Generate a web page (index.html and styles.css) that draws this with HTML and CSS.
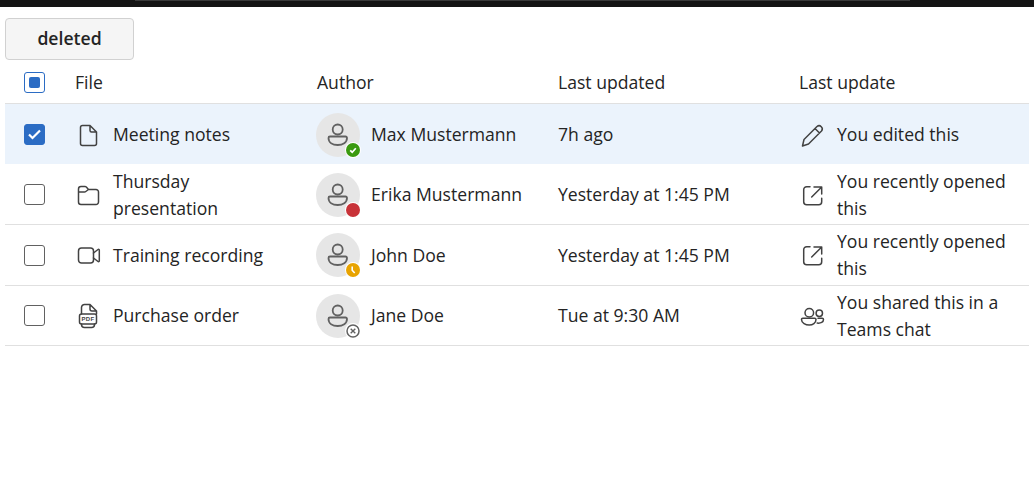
FILE: index.html
```html
<!DOCTYPE html>
<html lang="en">
<head>
<meta charset="utf-8">
<title>Files</title>
<link rel="stylesheet" href="styles.css">
</head>
<body>
<div class="topbar"><div class="topbar-line"></div></div>
<main class="content">
  <button class="btn" type="button">deleted</button>
  <div class="table">
    <div class="row head">
      <div class="cell check"><span class="box mixed"><i></i></span></div>
      <div class="cell">File</div>
      <div class="cell">Author</div>
      <div class="cell">Last updated</div>
      <div class="cell">Last update</div>
    </div>

    <div class="row selected">
      <div class="cell check"><span class="box on"><svg viewBox="0 0 13 11" width="13" height="11"><path d="M1 5.500 4.500 9 12 1.500" fill="none" stroke="#fff" stroke-width="2.200"/></svg></span></div>
      <div class="cell file">
        <svg class="ico" viewBox="0 0 26 26"><path d="M7.500 3.500H15L21.500 10V21.500a2 2 0 0 1-2 2h-12a2 2 0 0 1-2-2v-16a2 2 0 0 1 2-2ZM15 3.500V8.500a1.500 1.500 0 0 0 1.500 1.500h5"/></svg>
        <span>Meeting notes</span>
      </div>
      <div class="cell person">
        <span class="avatar"><svg viewBox="0 0 44 44" width="44" height="44"><circle cx="21.700" cy="16.500" r="5"/><path d="M14 23.500h15.500a1.500 1.500 0 0 1 1.500 1.500c0 4.500-4.200 7-9.300 7s-9.200-2.500-9.200-7a1.500 1.500 0 0 1 1.500-1.500Z"/></svg>
          <span class="badge green"><svg viewBox="0 0 14 14" width="14" height="14"><path d="M4.200 7.300 6.200 9.200 9.800 5.200" fill="none" stroke="#fff" stroke-width="1.700"/></svg></span></span>
        <span>Max Mustermann</span>
      </div>
      <div class="cell">7h ago</div>
      <div class="cell file">
        <svg class="ico" viewBox="0 0 26 26"><path d="M3.500 24 5 17.500 18 4.500a3.200 3.200 0 0 1 4.500 4.500L9.500 22ZM16 6.500l4.500 4.500"/></svg>
        <span>You edited this</span>
      </div>
    </div>

    <div class="row">
      <div class="cell check"><span class="box"></span></div>
      <div class="cell file">
        <svg class="ico" viewBox="0 0 26 26"><path d="M3.500 7a2.500 2.500 0 0 1 2.500-2.500h4a2 2 0 0 1 1.300.5L13.500 7.500H21a2.500 2.500 0 0 1 2.500 2.500v10a2.500 2.500 0 0 1-2.500 2.500H6a2.500 2.500 0 0 1-2.500-2.500ZM3.500 10H9.500a2 2 0 0 0 1.300-.5L13.500 7.500"/></svg>
        <span>Thursday presentation</span>
      </div>
      <div class="cell person">
        <span class="avatar"><svg viewBox="0 0 44 44" width="44" height="44"><circle cx="21.700" cy="16.500" r="5"/><path d="M14 23.500h15.500a1.500 1.500 0 0 1 1.500 1.500c0 4.500-4.200 7-9.300 7s-9.200-2.500-9.200-7a1.500 1.500 0 0 1 1.500-1.500Z"/></svg>
          <span class="badge red"></span></span>
        <span>Erika Mustermann</span>
      </div>
      <div class="cell">Yesterday at 1:45 PM</div>
      <div class="cell file">
        <svg class="ico" viewBox="0 0 26 26"><path d="M11 4.700H7.700a3 3 0 0 0-3 3v12a3 3 0 0 0 3 3h12a3 3 0 0 0 3-3v-3.500M12.700 15 22.700 5M15 5h7.700v7"/></svg>
        <span>You recently opened this</span>
      </div>
    </div>

    <div class="row">
      <div class="cell check"><span class="box"></span></div>
      <div class="cell file">
        <svg class="ico" viewBox="0 0 26 26"><rect x="3.500" y="6" width="15" height="15" rx="3"/><path d="M18.500 11 23 7.500a.8.800 0 0 1 1.300.6V18.900a.8.800 0 0 1-1.300.6L18.500 16"/></svg>
        <span>Training recording</span>
      </div>
      <div class="cell person">
        <span class="avatar"><svg viewBox="0 0 44 44" width="44" height="44"><circle cx="21.700" cy="16.500" r="5"/><path d="M14 23.500h15.500a1.500 1.500 0 0 1 1.500 1.500c0 4.500-4.200 7-9.300 7s-9.200-2.500-9.200-7a1.500 1.500 0 0 1 1.500-1.500Z"/></svg>
          <span class="badge amber"><svg viewBox="0 0 14 14" width="14" height="14"><path d="M6.200 3.500V7.300L8.700 10" fill="none" stroke="#fff" stroke-width="1.600"/></svg></span></span>
        <span>John Doe</span>
      </div>
      <div class="cell">Yesterday at 1:45 PM</div>
      <div class="cell file">
        <svg class="ico" viewBox="0 0 26 26"><path d="M11 4.700H7.700a3 3 0 0 0-3 3v12a3 3 0 0 0 3 3h12a3 3 0 0 0 3-3v-3.500M12.700 15 22.700 5M15 5h7.700v7"/></svg>
        <span>You recently opened this</span>
      </div>
    </div>

    <div class="row">
      <div class="cell check"><span class="box"></span></div>
      <div class="cell file">
        <svg class="ico" viewBox="0 0 26 26"><path d="M6.500 11V4.500a3 3 0 0 1 3-3h5.500l6.500 6.500v3M15 1.500V6a2 2 0 0 0 2 2h4.500"/><rect x="4.500" y="11" width="17" height="10" rx="2"/><path d="M6.500 21v.500a3 3 0 0 0 3 3h7a3 3 0 0 0 3-3V21"/><text class="pdf" x="13" y="18.300" text-anchor="middle">PDF</text></svg>
        <span>Purchase order</span>
      </div>
      <div class="cell person">
        <span class="avatar"><svg viewBox="0 0 44 44" width="44" height="44"><circle cx="21.700" cy="16.500" r="5"/><path d="M14 23.500h15.500a1.500 1.500 0 0 1 1.500 1.500c0 4.500-4.200 7-9.300 7s-9.200-2.500-9.200-7a1.500 1.500 0 0 1 1.500-1.500Z"/></svg>
          <span class="badge off"><svg viewBox="0 0 14 14" width="14" height="14"><circle cx="7" cy="7" r="6" fill="#fff" stroke="#616161" stroke-width="1.500"/><path d="M4.700 4.700 9.300 9.300M9.300 4.700 4.700 9.300" fill="none" stroke="#616161" stroke-width="1.400"/></svg></span></span>
        <span>Jane Doe</span>
      </div>
      <div class="cell">Tue at 9:30 AM</div>
      <div class="cell file">
        <svg class="ico" viewBox="0 0 26 26"><circle cx="10.300" cy="9.800" r="4.300"/><circle cx="20.300" cy="10.200" r="3.200"/><path d="M3.800 15.200H15.700a1.300 1.300 0 0 1 1.300 1.300c0 3.500-3.300 5.500-6.800 5.500s-7.700-2-7.700-5.500a1.300 1.300 0 0 1 1.300-1.300ZM19 15.200h4.200a1.300 1.300 0 0 1 1.300 1.300c0 2.700-2.700 4-6.300 3.600"/></svg>
        <span>You shared this in a Teams chat</span>
      </div>
    </div>
  </div>
</main>
</body>
</html>
```

FILE: styles.css
```css
* { box-sizing: border-box; }

html, body {
  margin: 0;
  background: #fff;
}

body {
  font-family: "Open Sans", "Noto Sans", "Liberation Sans", sans-serif;
  font-size: 17.600px;
  line-height: 27px;
  color: #242424;
  overflow: hidden;
}

.topbar {
  height: 7px;
  background: #141414;
  padding: 0 124px 0 135px;
}

.topbar-line {
  height: 1px;
  background: #3a3a3a;
}

.content {
  padding: 11px 5px 0;
}

.btn {
  display: block;
  width: 129px;
  height: 42px;
  padding: 0 0 2px;
  border: 1px solid #d1d1d1;
  border-radius: 4px;
  background: #f5f5f5;
  color: #242424;
  font: 600 17.600px/27px "Open Sans", "Noto Sans", "Liberation Sans", sans-serif;
}

.row {
  display: grid;
  grid-template-columns: 60px 242px 241px 241px 240px;
  align-items: center;
  height: 60.400px;
  padding-top: 1px;
  border-bottom: 1px solid #e0e0e0;
}

.row.head {
  height: 44.400px;
}

.row.selected {
  background: #ebf3fc;
  background-clip: padding-box;
  border-bottom-color: transparent;
}

.cell {
  padding: 0 10px;
  min-width: 0;
}

.check {
  padding: 0 0 0 19px;
  display: flex;
}

.box {
  display: flex;
  align-items: center;
  justify-content: center;
  width: 21px;
  height: 21px;
  border: 1px solid #616161;
  border-radius: 3px;
  background: #fff;
}

.box.mixed {
  border-color: #2b6cc4;
}

.box.mixed i {
  display: block;
  width: 11px;
  height: 11px;
  border-radius: 2px;
  background: #2b6cc4;
}

.box.on {
  border-color: #2b6cc4;
  background: #2b6cc4;
}

.file,
.person {
  display: flex;
  align-items: center;
}

.file {
  gap: 12px;
}

.person {
  gap: 11px;
  padding-left: 9px;
}

.ico {
  flex: none;
  width: 26px;
  height: 26px;
  fill: none;
  stroke: #424242;
  stroke-width: 1.500;
  stroke-linejoin: round;
  stroke-linecap: round;
}

.pdf {
  font: 700 6px "Liberation Sans", sans-serif;
  letter-spacing: 0.300px;
  fill: #424242;
  stroke: none;
}

.avatar {
  position: relative;
  flex: none;
  width: 44px;
  height: 44px;
  border-radius: 50%;
  background: #e6e6e6;
}

.avatar > svg {
  display: block;
  fill: none;
  stroke: #616161;
  stroke-width: 1.800;
}

.badge {
  position: absolute;
  right: 0;
  bottom: 0;
  display: block;
  width: 14px;
  height: 14px;
  border-radius: 50%;
  box-shadow: 0 0 0 1px #fff;
}

.badge svg {
  display: block;
}

.green { background: #3a9a0f; }
.red { background: #c83238; }
.amber { background: #e8a300; }
.off { background: #fff; }
```
